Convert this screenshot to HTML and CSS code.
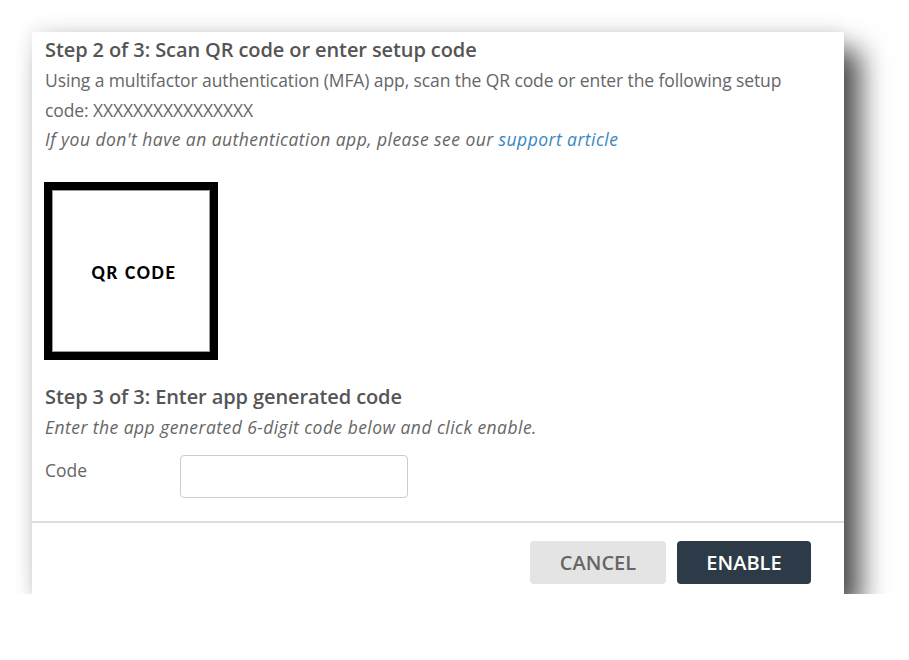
FILE: index.html
```
<!DOCTYPE html>
<html>
<head>
  <meta charset='UTF-8'>
  <title>Enable MFA</title>
  <link rel="stylesheet" href="styles.css">
</head>
<body>
  <div class='painel'>
    <div class='corpo'>
      <h2 class='titulo'>Step 2 of 3: Scan QR code or enter setup code</h2>
      <p class='texto primeiro'>Using a multifactor authentication (MFA) app, scan the QR code or enter the following setup code: XXXXXXXXXXXXXXXX</p>
      <p class='texto nota'>If you don't have an authentication app, please see our <a href='#'>support article</a></p>
      <div class='qr'><span>QR CODE</span></div>
      <h2 class='titulo passo3'>Step 3 of 3: Enter app generated code</h2>
      <p class='texto nota primeiro'>Enter the app generated 6-digit code below and click enable.</p>
      <div class='campo'>
        <label class='rotulo' for='code'>Code</label>
        <input type='text' id='code'>
      </div>
    </div>
    <div class='rodape'>
      <button class='botao cancelar'>CANCEL</button>
      <button class='botao ativar'>ENABLE</button>
    </div>
  </div>
</body>
</html>
```
FILE: styles.css
```
body { margin: 0; background: #fff; font-family: "Open Sans", sans-serif; }
.painel { width: 812px; margin: 32px 0 0 32px; background: #fff; box-shadow: -2px -4px 16px rgba(0,0,0,0.08), 16px 18px 26px rgba(0,0,0,0.7); }
.corpo { padding: 4px 48px 23px 13px; }
.titulo { margin: 0; font-size: 20px; line-height: 28px; font-weight: 600; color: #555; letter-spacing: -0.1px; }
.texto { margin: 0; font-size: 17.5px; line-height: 29.5px; color: #666; letter-spacing: -0.1px; }
.primeiro { margin-top: 2px; }
.nota { font-style: italic; letter-spacing: 0.45px; }
.nota a { color: #3a86c0; text-decoration: none; }
.qr { width: 158px; height: 162px; margin: 27px 0 0 -1px; border: 8px solid #000; box-shadow: inset 0 0 0 1px #999; display: flex; align-items: center; justify-content: center; }
.qr span { font-family: Carlito, Calibri, "Open Sans", sans-serif; font-weight: bold; font-size: 19.5px; letter-spacing: 1.6px; color: #000; margin: 2px 0 0 6px; }
.passo3 { margin-top: 23px; }
.campo { display: flex; align-items: center; margin-top: 13px; }
.rotulo { width: 135px; font-size: 17.5px; color: #666; margin-top: -13px; }
.campo input { padding: 0 8px; box-sizing: border-box; width: 228px; height: 43px; border: 1px solid #ccc; border-radius: 4px; font-size: 16px; }
.rodape { border-top: 2px solid #ddd; display: flex; justify-content: flex-end; gap: 11px; padding: 18px 33px 10px 0; }
.botao { font-family: "Open Sans", sans-serif; font-weight: 600; font-size: 20px; height: 43px; border: none; border-radius: 4px; cursor: pointer; }
.cancelar { width: 136px; background: #e4e4e4; color: #666; }
.ativar { width: 134px; background: #2d3a47; color: #fff; }
```
